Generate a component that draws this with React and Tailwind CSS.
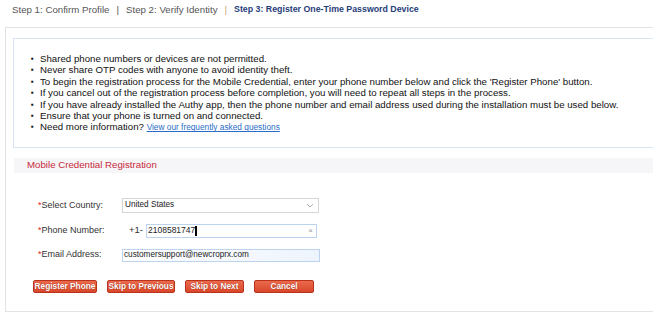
const bullets = [
  'Shared phone numbers or devices are not permitted.',
  'Never share OTP codes with anyone to avoid identity theft.',
  "To begin the registration process for the Mobile Credential, enter your phone number below and click the 'Register Phone' button.",
  'If you cancel out of the registration process before completion, you will need to repeat all steps in the process.',
  'If you have already installed the Authy app, then the phone number and email address used during the installation must be used below.',
  'Ensure that your phone is turned on and connected.',
];

const RedButton = ({ label, width }) => (
  <button
    className="h-[13px] rounded-[2px] border border-[#b8321c] bg-gradient-to-b from-[#ec6a4c] to-[#d8472a] text-white font-bold text-[8.3px] leading-[11px] whitespace-nowrap [text-shadow:0_0_1px_#8a2010] flex items-center justify-center"
    style={{ width }}
  >
    {label}
  </button>
);

const Label = ({ children }) => (
  <div className="w-[84px] text-[9px] text-[#333] whitespace-nowrap">
    <span className="text-[#e02020]">*</span>
    {children}
  </div>
);

export default function App() {
  return (
    <div className="w-[653px] h-[320px] overflow-hidden bg-white font-['Liberation_Sans',Arial,sans-serif] text-[9.7px]">
      {/* 步驟列 */}
      <div className="flex items-center h-[20px] pl-[12px] text-[9.7px] text-[#555] whitespace-nowrap">
        <span>Step 1: Confirm Profile</span>
        <span className="mx-[7px]">|</span>
        <span>Step 2: Verify Identity</span>
        <span className="mx-[7px] text-[#c8a070]">|</span>
        <span className="font-bold text-[8.8px] text-[#1f3d7a]">Step 3: Register One-Time Password Device</span>
      </div>

      <div className="ml-[5px] mt-[7px] w-[700px] h-[285px] border border-[#e3e3e3] pt-[10px] pl-[7px]">
        {/* 說明 */}
        <div className="h-[110px] border border-[#d9e6f2] pt-[14px] pl-[17px]">
          <ul className="text-[#111] leading-[11.4px] whitespace-nowrap">
            {bullets.map((b) => (
              <li key={b} className="flex">
                <span className="w-[9px] text-[8px]">▪</span>
                <span>{b}</span>
              </li>
            ))}
            <li className="flex">
              <span className="w-[9px] text-[8px]">▪</span>
              <span>
                Need more information?{' '}
                <a href="#" className="text-[#2a6cc7] underline text-[8.3px]">
                  View our frequently asked questions
                </a>
              </span>
            </li>
          </ul>
        </div>

        {/* 表單 */}
        <div className="mt-[10px] ml-[1px] h-[15px] bg-[#f6f6f8] pl-[13px] flex items-center text-[#c8283a]">
          Mobile Credential Registration
        </div>

        <div className="pl-[25px] pt-[25px] flex flex-col">
          <div className="flex items-center h-[15px]">
            <Label>Select Country:</Label>
            <div className="w-[197px] h-[15px] border border-[#d6d6d6] flex items-center justify-between px-[2px] text-[8.2px] text-[#222]">
              <span>United States</span>
              <svg width="8" height="6" viewBox="0 0 8 6" className="mr-[2px]">
                <path d="M1 1 L4 4 L7 1" stroke="#aaa" strokeWidth="1" fill="none" />
              </svg>
            </div>
          </div>

          <div className="flex items-center h-[15px] mt-[10px]">
            <Label>Phone Number:</Label>
            <span className="ml-[7px] w-[17px] text-[9.5px] text-[#333]">+1-</span>
            <div className="w-[171px] h-[14px] border border-[#bcd3ef] flex items-center justify-between px-[1px] text-[8.5px] text-[#222]">
              <span className="flex items-center">
                2108581747<span className="inline-block w-[2px] h-[10px] bg-black" />
              </span>
              <span className="text-[8px] text-[#999] mr-[2px]">×</span>
            </div>
          </div>

          <div className="flex items-center h-[14px] mt-[10px]">
            <Label>Email Address:</Label>
            <div className="w-[198px] h-[13px] border border-[#bcd3ef] bg-gradient-to-r from-white to-[#eef4fd] flex items-center px-[1px] text-[8.2px] text-[#222]">
              customersupport@newcroprx.com
            </div>
          </div>

          <div className="flex gap-[10px] mt-[18px] ml-[-5px]">
            <RedButton label="Register Phone" width={64} />
            <RedButton label="Skip to Previous" width={68} />
            <RedButton label="Skip to Next" width={59} />
            <RedButton label="Cancel" width={60} />
          </div>
        </div>
      </div>
    </div>
  );
}
